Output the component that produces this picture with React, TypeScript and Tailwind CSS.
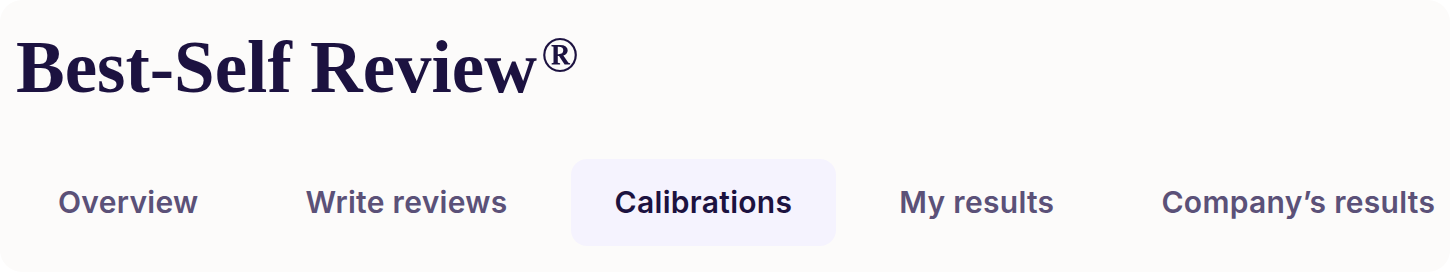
const tabs = ['Overview', 'Write reviews', 'Calibrations', 'My results', "Company\u2019s results"];

export default function App() {
  const active = 'Calibrations';

  return (
    <div className="w-[1450px] h-[272px] bg-white">
      <div className="h-full rounded-[22px] bg-[#fcfbfa] overflow-hidden pt-[30px]">
        <h1
          className="pl-[16px] text-[73px] leading-none font-bold text-[#1c1240] whitespace-nowrap"
          style={{ fontFamily: '"Liberation Serif", serif' }}
        >
          Best-Self Review<span className="text-[50px] align-[20px] ml-[4px]">®</span>
        </h1>

        <nav
          className="mt-[55px] flex gap-[19px] pl-[14px] whitespace-nowrap"
          style={{ fontFamily: 'Inter, "Noto Sans", sans-serif' }}
        >
          {tabs.map((tab) => (
            <button
              key={tab}
              className={`h-[87px] px-11 rounded-2xl text-[30px] font-semibold tracking-[0.3px] flex items-center shrink-0 ${
                tab === active ? 'bg-[#f5f3fe] text-[#1c1240]' : 'text-[#5b5178]'
              }`}
            >
              {tab}
            </button>
          ))}
        </nav>
      </div>
    </div>
  );
}
